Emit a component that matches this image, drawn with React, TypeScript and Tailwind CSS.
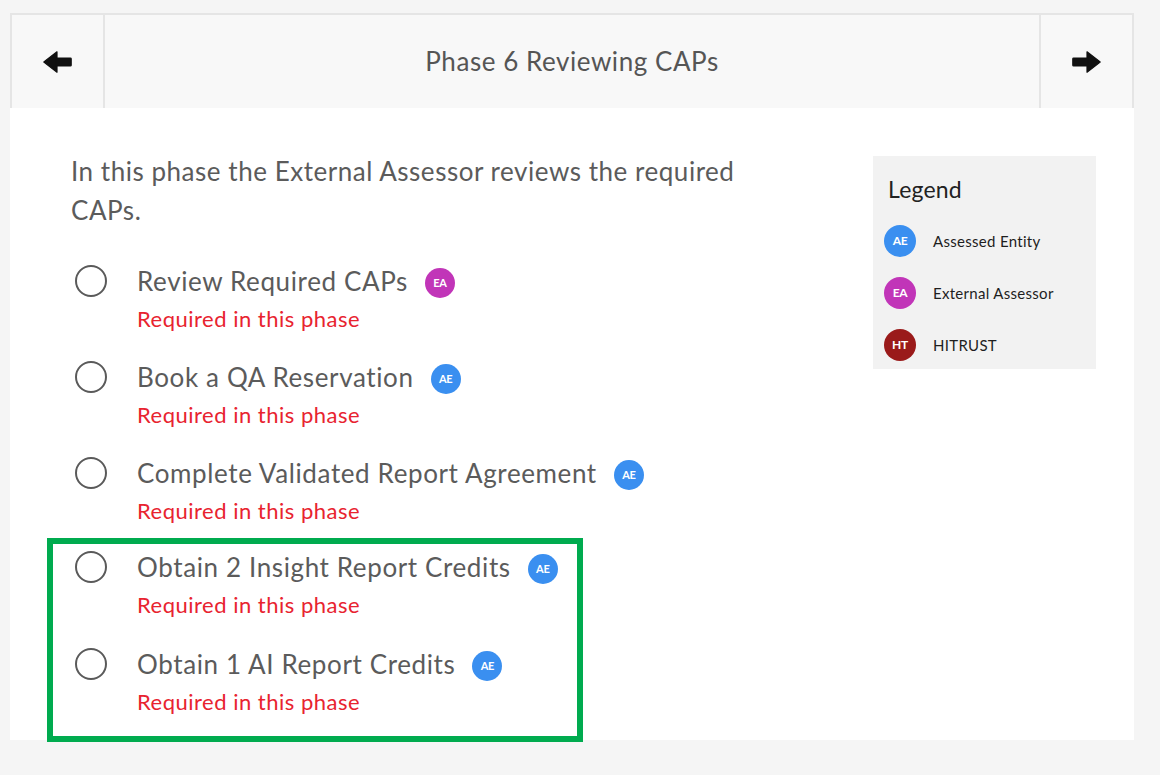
import React from "react";

type Role = "AE" | "EA" | "HT";

const badgeBg: Record<Role, string> = {
  AE: "bg-[#3a8ff0]",
  EA: "bg-[#c135b8]",
  HT: "bg-[#9a1a1a]",
};

function Badge({ role, size = "sm" }: { role: Role; size?: "sm" | "lg" }) {
  return (
    <span
      className={
        "inline-flex shrink-0 items-center justify-center rounded-full font-bold tracking-[-0.3px] text-white " +
        badgeBg[role] +
        (size === "sm" ? " h-[30px] w-[30px] text-[11px]" : " h-[32px] w-[32px] text-[12px]")
      }
    >
      {role}
    </span>
  );
}

function Arrow({ dir }: { dir: "left" | "right" }) {
  return (
    <svg
      width="29"
      height="22"
      viewBox="0 0 29 22"
      className={dir === "right" ? "-scale-x-100" : ""}
    >
      <g fill="#111" stroke="#111" strokeWidth="1.2" strokeLinejoin="round">
        <polygon points="0.8,11 14,0.8 14,21.2" />
        <rect x="13" y="7" width="15.2" height="8" rx="0.8" />
      </g>
    </svg>
  );
}

function Item({ title, role }: { title: string; role: Role }) {
  return (
    <div className="flex items-start">
      <div className="flex h-[36px] w-[66px] items-center pl-[4px]">
        <span className="block h-[32px] w-[32px] rounded-full border-2 border-[#5a5a5a]" />
      </div>
      <div className="flex flex-col">
        <div className="flex h-[36px] items-center">
          <span className="text-[26px] leading-[36px] tracking-[0.62px] text-[#5b5b5b]">{title}</span>
          <span className="ml-[17px] mt-[4px]">
            <Badge role={role} />
          </span>
        </div>
        <div className="text-[22px] leading-[40px] tracking-[0.5px] text-[#e8232f]">
          Required in this phase
        </div>
      </div>
    </div>
  );
}

function LegendRow({ role, label }: { role: Role; label: string }) {
  return (
    <div className="flex h-[52px] items-center">
      <Badge role={role} size="lg" />
      <span className="ml-[17px] text-[15px] tracking-[0.3px] text-[#1e1e1e]">{label}</span>
    </div>
  );
}

export default function App() {
  return (
    <div
      className="min-h-[775px] w-[1160px] bg-[#f5f5f5] pl-[10px] pt-[13px]"
      style={{ fontFamily: "Lato, 'Open Sans', sans-serif" }}
    >
      <div className="w-[1124px]">
        {/* header */}
        <div className="flex h-[95px] border-2 border-b-0 border-[#e5e5e5] bg-[#f8f8f8]">
          <div className="flex w-[93px] items-center justify-center border-r-2 border-[#e5e5e5]">
            <Arrow dir="left" />
          </div>
          <div className="flex flex-1 items-center justify-center text-[26px] tracking-[0.55px] text-[#555]">
            Phase 6 Reviewing CAPs
          </div>
          <div className="flex w-[93px] items-center justify-center border-l-2 border-[#e5e5e5]">
            <Arrow dir="right" />
          </div>
        </div>

        {/* body */}
        <div className="flex h-[632px] bg-white">
          <div className="w-[740px] pl-[61px] pt-[44px]">
            <p className="text-[26px] leading-[39px] tracking-[0.53px] text-[#5b5b5b]">
              In this phase the External Assessor reviews the required CAPs.
            </p>
            <div className="mt-[33px] flex flex-col gap-[20px]">
              <Item title="Review Required CAPs" role="EA" />
              <Item title="Book a QA Reservation" role="AE" />
              <Item title="Complete Validated Report Agreement" role="AE" />
            </div>
            <div className="-ml-[24px] mt-[7px] flex w-[536px] flex-col gap-[21px] border-[6px] border-[#00ab4f] pb-[14px] pl-[18px] pt-[5px]">
              <Item title="Obtain 2 Insight Report Credits" role="AE" />
              <Item title="Obtain 1 AI Report Credits" role="AE" />
            </div>
          </div>
          <div className="flex flex-1 justify-end pr-[38px] pt-[48px]">
            <div className="h-[213px] w-[223px] bg-[#f2f2f2] pl-[11px] pt-[16px]">
              <div className="pl-[4px] text-[23px] leading-[34px] tracking-[0.2px] text-[#222]">Legend</div>
              <div className="mt-[9px] flex flex-col">
                <LegendRow role="AE" label="Assessed Entity" />
                <LegendRow role="EA" label="External Assessor" />
                <LegendRow role="HT" label="HITRUST" />
              </div>
            </div>
          </div>
        </div>
      </div>
    </div>
  );
}
